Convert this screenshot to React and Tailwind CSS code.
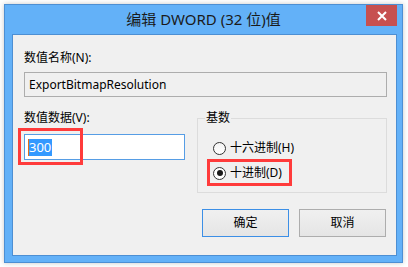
export default function App() {
  const ui = { fontFamily: '"Noto Sans", "Noto Sans CJK SC", sans-serif' };

  return (
    <div className="w-[408px] h-[267px] bg-white pt-[4px] pl-[4px]" style={ui}>
      {/* WINDOW */}
      <div className="w-[399px] h-[259px] border border-[#4d8fd3] bg-[#63b1f8] flex flex-col shadow-[0_0_5px_rgba(0,0,0,0.22)]">
        {/* TITLE BAR */}
        <div className="relative h-[29px] flex items-center justify-center">
          <span className="text-[15px] leading-none text-[#1b1b1b] mt-[-1px]">
            编辑 DWORD (32 位)值
          </span>
          <button className="absolute top-0 right-[5px] w-[31px] h-[21px] bg-[#c75050] flex items-center justify-center">
            <svg width="10" height="10" viewBox="0 0 10 10">
              <path d="M1 1L9 9M9 1L1 9" stroke="#fff" strokeWidth="2" />
            </svg>
          </button>
        </div>

        {/* CLIENT AREA */}
        <div className="ml-[7px] mr-[5px] h-[222px] border border-[#4d8fd3] bg-[#f0f0f0] pt-[15px] pl-[11px] pr-[9px] flex flex-col text-[12px] leading-[16px] text-black">
          <label className="h-[16px]">数值名称(N):</label>
          <div className="mt-[6px] h-[25px] border border-[#adadad] bg-[#f0f0f0] flex items-center pl-[4px] text-[12px]">
            ExportBitmapResolution
          </div>

          <div className="mt-[13px] flex gap-[12px]">
            {/* VALUE DATA */}
            <div className="relative w-[161px]">
              <label className="block h-[16px]">数值数据(V):</label>
              <div className="mt-[8px] h-[26px] border border-[#569de5] bg-white flex items-center pl-[3px]">
                <span className="relative bg-[#3399ff] text-white text-[13px] leading-[17px] px-[1px]">
                  <span className="absolute left-0 top-0 w-[1px] h-[17px] bg-[#e0701c]" />
                  300
                </span>
              </div>
              <div className="absolute left-[-6px] top-[18px] w-[65px] h-[37px] border-[3px] border-[#ff3b3b]" />
            </div>

            {/* RADIX GROUP */}
            <div className="relative mt-[8px] w-[190px] h-[75px] border border-[#dcdcdc] pl-[15px] pt-[21px]">
              <span className="absolute left-[7px] top-[-9px] bg-[#f0f0f0] px-[1px]">基数</span>
              <div className="flex items-center gap-[4px] h-[16px]">
                <span className="w-[13px] h-[13px] rounded-full border border-[#333] bg-gradient-to-b from-[#f4f4f4] to-white" />
                <span>十六进制(H)</span>
              </div>
              <div className="relative mt-[9px] flex items-center gap-[4px] h-[16px]">
                <span className="w-[13px] h-[13px] rounded-full border border-[#333] bg-white flex items-center justify-center">
                  <span className="w-[6px] h-[6px] rounded-full bg-[#1a1a1a]" />
                </span>
                <span>十进制(D)</span>
                <div className="absolute left-[-6px] top-[-6px] w-[85px] h-[27px] border-[3px] border-[#ff3b3b]" />
              </div>
            </div>
          </div>

          {/* BUTTONS */}
          <div className="mt-[16px] flex justify-end gap-[10px] mr-[1px]">
            <button className="w-[87px] h-[28px] border border-[#3c8fe6] bg-gradient-to-b from-[#f0f0f0] to-[#e5e5e5] text-[12px]">
              确定
            </button>
            <button className="w-[87px] h-[28px] border border-[#adadad] bg-gradient-to-b from-[#f0f0f0] to-[#e5e5e5] text-[12px]">
              取消
            </button>
          </div>
        </div>
      </div>
    </div>
  );
}
